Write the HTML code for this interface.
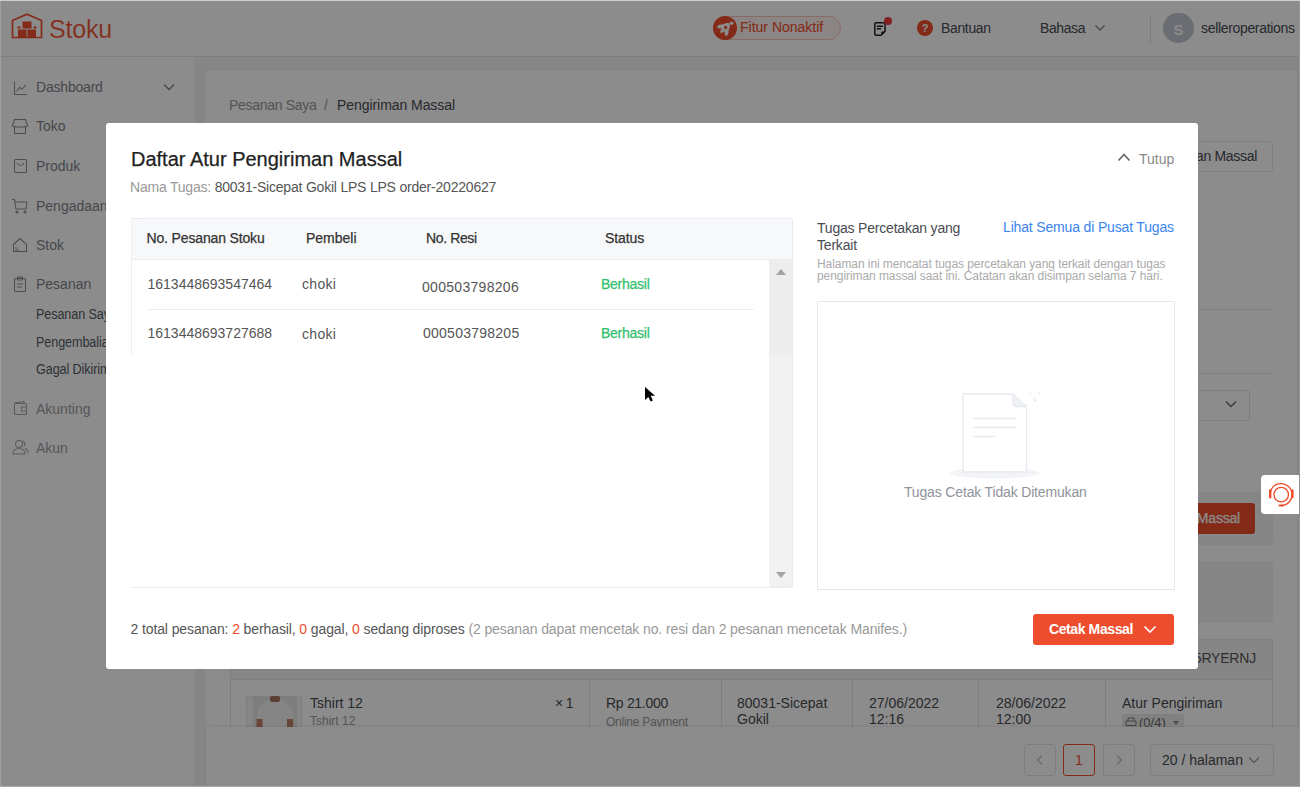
<!DOCTYPE html>
<html><head><meta charset="utf-8">
<style>
*{box-sizing:border-box;margin:0;padding:0}
html,body{width:1300px;height:787px;overflow:hidden;background:#fff}
body{position:relative;font-family:"Liberation Sans",sans-serif;font-size:14px;color:#333}
.a{position:absolute;white-space:nowrap}
.t{position:absolute;white-space:nowrap;line-height:1}
.med{-webkit-text-stroke:0.25px currentColor}
/* page */
#hdr{left:0;top:0;width:1300px;height:57px;background:#fff;border-bottom:1px solid #e5e5e5}
#side{left:0;top:57px;width:195px;height:730px;background:#fff;border-right:1px solid #ebebf0}
#cbg{left:194px;top:57px;width:1106px;height:730px;background:#f5f5f5}
#card{left:206px;top:71px;width:1091px;height:700px;background:#fff;border-radius:2px}
#overlay{left:0;top:0;width:1300px;height:787px;background:rgba(0,0,0,0.45)}
#modal{left:106px;top:123px;width:1092px;height:546px;background:#fff;border-radius:3px}
</style></head>
<body>
<!-- ============ PAGE (under overlay) ============ -->
<div class="a" id="hdr"></div>
<div class="a" id="side"></div>
<div class="a" id="cbg"></div>
<div class="a" id="card"></div>

<!-- header content -->
<svg class="a" style="left:11px;top:13px" width="32" height="26" viewBox="0 0 32 26">
  <path d="M1.5 24.5 V7.5 L16 1.2 L30.5 7.5 V24.5 Z" fill="none" stroke="#ee4d2d" stroke-width="1.7"/>
  <rect x="11.5" y="8.5" width="9" height="7" fill="#ee4d2d"/>
  <rect x="7" y="16.5" width="8.5" height="8" fill="#ee4d2d"/>
  <rect x="16.5" y="16.5" width="8.5" height="8" fill="#ee4d2d"/>
  <rect x="6.5" y="13.5" width="3" height="2" fill="#ee4d2d"/>
  <rect x="22.5" y="13.5" width="3" height="2" fill="#ee4d2d"/>
</svg>
<div class="t" style="left:49px;top:16.5px;font-size:25px;color:#ee4d2d;letter-spacing:-0.2px;-webkit-text-stroke:0.2px #fff">Stoku</div>

<div class="a" style="left:713px;top:16px;width:128px;height:24px;border:1px solid #f7c4b8;background:#fdf2ee;border-radius:12px"></div>
<svg class="a" style="left:713px;top:16px" width="24" height="24" viewBox="0 0 24 24"><circle cx="12" cy="12" r="12" fill="#ee4d2d"/>
<g transform="rotate(45 12 12)" fill="#fff"><path d="M12 5.5 C15.5 7.5 16.2 11 15.6 15 L8.4 15 C7.8 11 8.5 7.5 12 5.5 Z"/><path d="M8.6 10 L5.3 14 L5.6 17.5 L9 16 Z"/><path d="M15.4 10 L18.7 14 L18.4 17.5 L15 16 Z"/><path d="M9.5 15 L12 19 L14.5 15 Z"/></g>
<circle cx="12.6" cy="11.4" r="1.6" fill="#ee4d2d"/><circle cx="18.6" cy="7.2" r="1.8" fill="#fff"/></svg>
<div class="t" style="left:740px;top:20px;color:#ee4d2d">Fitur Nonaktif</div>

<svg class="a" style="left:872px;top:20px" width="16" height="18" viewBox="0 0 16 18">
 <path d="M4 2.8 H11.8 Q13 2.8 13 4 V11.5 L9 15.2 H4 Q2.8 15.2 2.8 14 V4 Q2.8 2.8 4 2.8 Z" fill="none" stroke="#222" stroke-width="1.5" stroke-linejoin="round"/>
 <path d="M13 11.5 H10.2 Q9.2 11.5 9.2 12.5 V15.2 Z" fill="#222"/>
 <path d="M4.8 6.2 H11 M4.8 8.7 H9" stroke="#222" stroke-width="1.4"/>
</svg>
<div class="a" style="left:884px;top:16.5px;width:8px;height:8px;border-radius:50%;background:#f23a3a"></div>
<div class="a" style="left:917px;top:20px;width:16px;height:16px;border-radius:50%;background:#ee4d2d;color:#fff;font-size:11px;font-weight:bold;text-align:center;line-height:16px">?</div>
<div class="t" style="left:941px;top:21px;letter-spacing:-0.35px;color:#474b52">Bantuan</div>
<div class="t" style="left:1040px;top:21px;letter-spacing:-0.4px;color:#474b52">Bahasa</div>
<svg class="a" style="left:1093px;top:23px" width="14" height="10" viewBox="0 0 14 10" fill="none" stroke="#80848c" stroke-width="1.3"><path d="M2.5 2.5 L7 7 L11.5 2.5"/></svg>
<div class="a" style="left:1150px;top:14px;width:1px;height:30px;background:#e5e5e5"></div>
<div class="a" style="left:1163px;top:12.5px;width:30.5px;height:30.5px;border-radius:50%;background:#c2c6cf"></div>
<div class="t" style="left:1173.5px;top:21.5px;color:#fff;font-size:15px;font-weight:bold">S</div>
<div class="t" style="left:1201px;top:21px;letter-spacing:-0.33px;color:#474b52">selleroperations</div>


<!-- sidebar -->
<svg class="a" style="left:13px;top:80px" width="16" height="16" viewBox="0 0 16 16" fill="none" stroke="#8a8e96" stroke-width="1.05">
 <path d="M1.5 1.5 V14.5 H14"/><path d="M3.5 11.5 L6.8 7.3 L8.8 9.3 L13 4.8"/>
</svg>
<div class="t" style="left:36px;top:80px;color:#80848c;letter-spacing:-0.2px">Dashboard</div>
<svg class="a" style="left:161px;top:82px" width="16" height="10" viewBox="0 0 16 10" fill="none" stroke="#80848c" stroke-width="1.4"><path d="M3 2.5 L8 7.5 L13 2.5"/></svg>

<svg class="a" style="left:11px;top:118px" width="18" height="17" viewBox="0 0 18 17" fill="none" stroke="#8a8e96" stroke-width="1.05">
 <path d="M3.5 1.5 H14.5 L16.5 8 Q15.2 9.8 13.5 8.5 Q12 10 10.5 8.5 Q9 10 7.5 8.5 Q6 10 4.5 8.5 Q2.8 9.8 1.5 8 Z"/><path d="M3.5 9.3 V15.5 H14.5 V9.3"/>
</svg>
<div class="t" style="left:36px;top:119px;color:#80848c">Toko</div>

<svg class="a" style="left:13px;top:158px" width="15" height="16" viewBox="0 0 15 16" fill="none" stroke="#8a8e96" stroke-width="1.05">
 <rect x="1.5" y="1.5" width="12" height="13" rx="1"/><path d="M4 5 Q7.5 10 11 5"/>
</svg>
<div class="t" style="left:36px;top:158.5px;color:#80848c">Produk</div>

<svg class="a" style="left:11px;top:198px" width="17" height="16" viewBox="0 0 17 16" fill="none" stroke="#8a8e96" stroke-width="1.05">
 <path d="M1 1.5 H3.5 L5 11 H15 L16 4 H4"/><circle cx="6" cy="14" r="1"/><circle cx="14" cy="14" r="1"/>
</svg>
<div class="t" style="left:36px;top:199px;color:#80848c">Pengadaan</div>

<svg class="a" style="left:12px;top:237px" width="16" height="16" viewBox="0 0 16 16" fill="none" stroke="#8a8e96" stroke-width="1.05">
 <path d="M1.5 7.5 L8 1.5 L14.5 7.5 V14.5 H1.5 Z"/><path d="M4 14 V10 M6 14 V12"/>
</svg>
<div class="t" style="left:36px;top:238px;color:#80848c">Stok</div>

<svg class="a" style="left:13px;top:276px" width="14" height="17" viewBox="0 0 14 17" fill="none" stroke="#8a8e96" stroke-width="1.05">
 <rect x="1.5" y="2.5" width="11" height="13" rx="1"/><rect x="4.5" y="1" width="5" height="3" rx="0.5"/><path d="M4 8 H10 M4 11 H9"/>
</svg>
<div class="t" style="left:36px;top:277px;color:#80848c">Pesanan</div>
<div class="t" style="left:36px;top:306.5px;color:#555a63;letter-spacing:-0.1px;transform:scaleX(0.9);transform-origin:0 0">Pesanan Saya</div>
<div class="t" style="left:36px;top:335px;color:#555a63;letter-spacing:-0.1px;transform:scaleX(0.9);transform-origin:0 0">Pengembalian</div>
<div class="t" style="left:36px;top:362px;color:#555a63;letter-spacing:-0.1px;transform:scaleX(0.9);transform-origin:0 0">Gagal Dikirim</div>

<svg class="a" style="left:13px;top:400px" width="15" height="16" viewBox="0 0 15 16" fill="none" stroke="#a3a7ae" stroke-width="1.05">
 <path d="M1.5 3 L11 1.5 V3.5"/><rect x="1.5" y="3.5" width="12" height="11" rx="1"/><rect x="8.5" y="7" width="5" height="4"/>
</svg>
<div class="t" style="left:36px;top:401.5px;color:#9a9ea6">Akunting</div>
<svg class="a" style="left:12px;top:439px" width="17" height="16" viewBox="0 0 17 16" fill="none" stroke="#a3a7ae" stroke-width="1.05">
 <circle cx="7" cy="5" r="3.5"/><path d="M1 15 Q1 9.5 7 9.5 Q13 9.5 13 15 Z"/><path d="M10.5 2 Q13.5 3 12.5 7 M13 9.5 Q16 10.5 16 14"/>
</svg>
<div class="t" style="left:36px;top:440.5px;color:#9a9ea6">Akun</div>

<!-- page content -->
<div class="t" style="left:229px;top:98px;color:#999;letter-spacing:-0.3px">Pesanan Saya</div>
<div class="t" style="left:324px;top:98px;color:#999">/</div>
<div class="t" style="left:337px;top:98px;color:#474b52;letter-spacing:-0.06px">Pengiriman Massal</div>
<div class="a" style="left:1100px;top:141px;width:173px;height:31px;border:1px solid #e5e5e5;border-radius:3px"></div>
<div class="t" style="right:43px;top:149px;color:#474b52;letter-spacing:-0.3px">Atur Pengiriman Massal</div>
<div class="a" style="left:230px;top:309px;width:1043px;height:1px;background:#e8e8e8"></div>
<div class="a" style="left:230px;top:373px;width:1043px;height:1px;background:#e8e8e8"></div>
<div class="a" style="left:1000px;top:390px;width:250px;height:31px;border:1px solid #e5e5e5;border-radius:3px"></div>
<svg class="a" style="left:1224px;top:399px" width="14" height="10" viewBox="0 0 14 10" fill="none" stroke="#666" stroke-width="1.4"><path d="M2 2.5 L7 7.5 L12 2.5"/></svg>
<div class="a" style="left:230px;top:492px;width:1043px;height:53px;background:#f5f5f5;border-radius:3px"></div>
<div class="a" style="left:1130px;top:503px;width:125px;height:31px;background:#ee4d2d;border-radius:3px"></div>
<div class="t med" style="right:60px;top:511px;color:#fff;letter-spacing:-0.2px">Atur Pengiriman Massal</div>
<div class="a" style="left:230px;top:561px;width:1043px;height:62px;background:#f5f5f5;border-radius:3px"></div>
<!-- order block -->
<div class="a" style="left:230px;top:639px;width:1043px;height:150px;border:1px solid #e8e8e8;border-radius:3px"></div>
<div class="a" style="left:231px;top:640px;width:1041px;height:39px;background:#f5f5f5"></div>
<div class="a" style="left:231px;top:679px;width:1041px;height:1px;background:#e8e8e8"></div>
<div class="t" style="right:44px;top:650.5px;color:#555;letter-spacing:-0.2px">220627ZXVB5RYERNJ</div>
<svg class="a" style="left:246px;top:696px" width="56" height="40" viewBox="0 0 56 40">
 <rect x="0.5" y="0.5" width="55" height="39" fill="#f4f4f4" stroke="#e5e5e5"/>
 <rect x="7" y="1" width="44" height="38" fill="#e4e4e4"/>
 <path d="M19 5 L25 3 H33 L39 5 L46 12 L47 24 L41 24 L41 40 H17 L17 24 L11 24 L12 12 Z" fill="#f3f3f3"/>
 <rect x="24" y="0" width="10" height="6" rx="2" fill="#a87560"/>
 <rect x="10.5" y="23" width="6" height="10" fill="#c08068"/><rect x="41" y="23" width="6" height="10" fill="#c08068"/>
</svg>
<div class="t" style="left:310px;top:696px;color:#474b52">Tshirt 12</div>
<div class="t" style="left:310px;top:715px;color:#999;font-size:12px">Tshirt 12</div>
<div class="t" style="left:555px;top:696px;color:#474b52;letter-spacing:-0.6px">× 1</div>
<div class="a" style="left:589px;top:680px;width:1px;height:60px;background:#e8e8e8"></div>
<div class="t" style="left:606px;top:696px;color:#474b52;letter-spacing:-0.3px">Rp 21.000</div>
<div class="t" style="left:606px;top:716px;color:#999;font-size:12px;letter-spacing:-0.25px">Online Payment</div>
<div class="a" style="left:721px;top:680px;width:1px;height:60px;background:#e8e8e8"></div>
<div class="t" style="left:737px;top:696px;color:#474b52;line-height:15.5px;white-space:normal;width:100px">80031-Sicepat Gokil</div>
<div class="a" style="left:852px;top:680px;width:1px;height:60px;background:#e8e8e8"></div>
<div class="t" style="left:869px;top:696px;color:#474b52;line-height:15.5px;white-space:normal;width:80px">27/06/2022 12:16</div>
<div class="a" style="left:978px;top:680px;width:1px;height:60px;background:#e8e8e8"></div>
<div class="t" style="left:996px;top:696px;color:#474b52;line-height:15.5px;white-space:normal;width:80px">28/06/2022 12:00</div>
<div class="a" style="left:1105px;top:680px;width:1px;height:60px;background:#e8e8e8"></div>
<div class="t" style="left:1122px;top:696px;color:#474b52">Atur Pengiriman</div>
<div class="a" style="left:1122px;top:714px;width:62px;height:16px;background:#ececec;border-radius:2px"></div>
<svg class="a" style="left:1125px;top:717px" width="12" height="10" viewBox="0 0 12 10" fill="none" stroke="#777" stroke-width="1"><path d="M3 3.5 V1 H9 V3.5 M1 8.5 V4 H11 V8.5 Z"/></svg>
<div class="t" style="left:1139px;top:716px;color:#666;font-size:13px">(0/4)</div>
<div class="a" style="left:1173px;top:721px;width:0;height:0;border-left:3px solid transparent;border-right:3px solid transparent;border-top:4px solid #888"></div>
<!-- bottom bar -->
<div class="a" style="left:206px;top:727px;width:1094px;height:60px;background:#fff;box-shadow:0 -1px 3px rgba(0,0,0,0.08)"></div>
<div class="a" style="left:1024px;top:744px;width:32px;height:32px;border:1px solid #e5e5e5;border-radius:3px"></div>
<svg class="a" style="left:1034px;top:754px" width="12" height="12" viewBox="0 0 12 12" fill="none" stroke="#bbb" stroke-width="1.2"><path d="M8 1.5 L3.5 6 L8 10.5"/></svg>
<div class="a" style="left:1063px;top:744px;width:32px;height:32px;border:1px solid #ee4d2d;border-radius:3px;color:#ee4d2d;text-align:center;line-height:30px">1</div>
<div class="a" style="left:1103px;top:744px;width:32px;height:32px;border:1px solid #e5e5e5;border-radius:3px"></div>
<svg class="a" style="left:1113px;top:754px" width="12" height="12" viewBox="0 0 12 12" fill="none" stroke="#bbb" stroke-width="1.2"><path d="M4 1.5 L8.5 6 L4 10.5"/></svg>
<div class="a" style="left:1150px;top:744px;width:124px;height:32px;border:1px solid #e5e5e5;border-radius:3px"></div>
<div class="t" style="left:1162px;top:753px;color:#474b52">20 / halaman</div>
<svg class="a" style="left:1247px;top:755px" width="14" height="10" viewBox="0 0 14 10" fill="none" stroke="#999" stroke-width="1.2"><path d="M2 2.5 L7 7.5 L12 2.5"/></svg>

<!-- overlay -->
<div class="a" id="overlay"></div>

<!-- ============ MODAL ============ -->
<div class="a" id="modal"></div>
<div class="t med" style="left:131px;top:149px;font-size:20px;color:#222">Daftar Atur Pengiriman Massal</div>
<div class="t" style="left:130px;top:180px;letter-spacing:-0.21px"><span style="color:#999">Nama Tugas: </span><span style="color:#555">80031-Sicepat Gokil LPS LPS order-20220627</span></div>

<svg class="a" style="left:1116px;top:151px" width="16" height="12" viewBox="0 0 16 12" fill="none" stroke="#666" stroke-width="1.6"><path d="M2.5 9.5 L8 3.5 L13.5 9.5"/></svg>
<div class="t" style="left:1139px;top:151.5px;color:#888">Tutup</div>

<!-- table -->
<div class="a" style="left:130px;top:218px;width:663px;height:370px;border:1px solid #e9ecf1;border-left:none;border-top-right-radius:3px;border-bottom-right-radius:3px"></div>
<div class="a" style="left:131px;top:219px;width:1px;height:137px;background:#eceef2"></div><div class="a" style="left:131px;top:218px;width:10px;height:1px;background:#e8eaef"></div>
<div class="a" style="left:132px;top:219px;width:660px;height:41px;background:#f7f8fa;border-bottom:1px solid #e9ecf1"></div>
<div class="t med" style="left:146.5px;top:231px;color:#333;letter-spacing:-0.15px">No. Pesanan Stoku</div>
<div class="t med" style="left:306px;top:231px;color:#333">Pembeli</div>
<div class="t med" style="left:426px;top:231px;color:#333;letter-spacing:-0.37px">No. Resi</div>
<div class="t med" style="left:605px;top:231px;color:#333;letter-spacing:-0.1px">Status</div>

<div class="t" style="left:147.5px;top:276.5px;color:#555">1613448693547464</div>
<div class="t" style="left:302px;top:276.5px;color:#555;letter-spacing:0.3px">choki</div>
<div class="t" style="left:422px;top:279.5px;color:#555;letter-spacing:0.3px">000503798206</div>
<div class="t med" style="left:601px;top:276.5px;color:#30c06c;letter-spacing:-0.25px">Berhasil</div>
<div class="a" style="left:147px;top:309px;width:607px;height:1px;background:#e8eef3"></div>
<div class="t" style="left:147.5px;top:325.5px;color:#555">1613448693727688</div>
<div class="t" style="left:302px;top:326.5px;color:#555;letter-spacing:0.3px">choki</div>
<div class="t" style="left:423px;top:325.5px;color:#555;letter-spacing:0.25px">000503798205</div>
<div class="t med" style="left:601px;top:325.5px;color:#30c06c;letter-spacing:-0.25px">Berhasil</div>
<!-- scrollbar -->
<div class="a" style="left:769px;top:260px;width:23px;height:327px;background:#f1f1f1;border-bottom-right-radius:3px"></div>
<div class="a" style="left:769px;top:260px;width:23px;height:96px;background:#ededed"></div>
<div class="a" style="left:776px;top:269px;width:0;height:0;border-left:5px solid transparent;border-right:5px solid transparent;border-bottom:6px solid #a3a3a3"></div>
<div class="a" style="left:776px;top:572px;width:0;height:0;border-left:5px solid transparent;border-right:5px solid transparent;border-top:6px solid #a3a3a3"></div>

<!-- cursor -->
<svg class="a" style="left:644px;top:386px" width="14" height="18" viewBox="0 0 14 18"><path d="M1 1 V14 L4.3 10.9 L6.6 15.6 L8.9 14.6 L6.7 9.8 H11 Z" fill="#000"/></svg>

<!-- right panel -->
<div class="t" style="left:817px;top:220px;color:#474b52;line-height:17px;letter-spacing:-0.2px">Tugas Percetakan yang<br>Terkait</div>
<div class="t" style="left:1003px;top:220px;color:#3a84ee;letter-spacing:-0.16px">Lihat Semua di Pusat Tugas</div>
<div class="t" style="left:817px;top:258px;color:#aaa;font-size:12px;line-height:12.3px;letter-spacing:-0.07px">Halaman ini mencatat tugas percetakan yang terkait dengan tugas<br>pengiriman massal saat ini. Catatan akan disimpan selama 7 hari.</div>
<div class="a" style="left:817px;top:301px;width:358px;height:289px;border:1px solid #e5e7eb"></div>
<svg class="a" style="left:948px;top:390px" width="96" height="92" viewBox="0 0 96 92">
 <ellipse cx="47" cy="83" rx="45" ry="5.5" fill="#f3f4f7"/>
 <path d="M15 4 H65 L78.5 16.5 V82 H15 Z" fill="#fff" stroke="#e6e9ee" stroke-width="1.3"/>
 <path d="M65 4 V14 Q65 16.5 67.5 16.5 H78.5" fill="#eef0f3" stroke="#e6e9ee" stroke-width="1.3"/>
 <path d="M25 28.5 H68 M25 37.5 H68 M25 46.5 H48" stroke="#e6e9ee" stroke-width="1.3"/>
 <circle cx="87" cy="10" r="1.8" fill="#eceef1"/><circle cx="82.5" cy="4" r="1" fill="#eceef1"/><circle cx="91" cy="3" r="1" fill="#eceef1"/>
</svg>
<div class="t" style="left:904px;top:485px;color:#8f949c;letter-spacing:-0.16px">Tugas Cetak Tidak Ditemukan</div>

<!-- footer -->
<div class="t" style="left:130.5px;top:622px;color:#555;letter-spacing:-0.11px">2 total pesanan: <span style="color:#ee4d2d">2</span> berhasil, <span style="color:#ee4d2d">0</span> gagal, <span style="color:#ee4d2d">0</span> sedang diproses <span style="color:#999">(2 pesanan dapat mencetak no. resi dan 2 pesanan mencetak Manifes.)</span></div>
<div class="a" style="left:1033px;top:614px;width:141px;height:31px;background:#ee4d2d;border-radius:3px"></div>
<div class="t" style="left:1049px;top:622px;color:#fff;font-weight:bold;letter-spacing:-0.4px">Cetak Massal</div>
<svg class="a" style="left:1143px;top:622px" width="14" height="14" viewBox="0 0 14 14" fill="none" stroke="#fff" stroke-width="1.6"><path d="M1.5 4.5 L7 10 L12.5 4.5"/></svg>

<!-- support widget -->
<div class="a" style="left:1261px;top:475px;width:40px;height:39px;background:#fff;border-radius:4px 0 0 4px"></div>
<svg class="a" style="left:1261px;top:475px" width="39" height="39" viewBox="0 0 39 39" fill="none" stroke="#ee4d2d">
 <circle cx="20.2" cy="19.6" r="7.3" stroke-width="1.3"/>
 <path d="M9.7 23.4 A11 11 0 1 1 20.2 30.6" stroke-width="1.3"/>
 <path d="M9.2 15.5 V22 M31.4 15.5 V22" stroke-width="2.4" stroke-linecap="round"/>
 <path d="M18.5 30.6 H21.8" stroke-width="2" stroke-linecap="round"/>
</svg>

<!-- frame -->
<div class="a" style="left:0;top:0;width:1300px;height:1px;background:#cfcfcf"></div>
<div class="a" style="left:0;top:1px;width:1px;height:786px;background:#a0a0a0"></div>
<div class="a" style="left:0;top:786px;width:1300px;height:1px;background:#a8a8a8"></div>
<div class="a" style="left:1299px;top:1px;width:1px;height:785px;background:#939393"></div>

</body></html>
